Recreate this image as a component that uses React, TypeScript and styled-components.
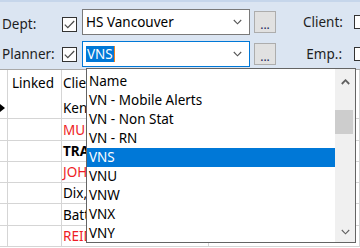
import React from "react";
import styled, { createGlobalStyle } from "styled-components";

const GlobalStyle = createGlobalStyle`
  html, body { margin: 0; padding: 0; background: #fff; }
  body { font-family: "Noto Sans", "Liberation Sans", sans-serif; }
`;

const Page = styled.div`
  width: 360px;
  height: 248px;
  position: relative;
  overflow: hidden;
  font-size: 13.5px;
  color: #1e1e1e;
`;

const FilterBar = styled.div`
  height: 69px;
  box-sizing: border-box;
  background: #dbe5f2;
  border-top: 2px solid #c6d6eb;
  padding: 7px 0 0 2px;
  display: flex;
  flex-direction: column;
  gap: 6px;
`;

const FilterRow = styled.div`
  display: flex;
  align-items: center;
  height: 26px;
  white-space: nowrap;
`;

const Label = styled.span<{ $drop?: number }>`
  width: 60px;
  flex: none;
  margin-top: ${(p) => p.$drop ?? 0}px;
`;

const CheckBox = styled.span<{ $drop?: number }>`
  width: 15px;
  height: 15px;
  box-sizing: border-box;
  border: 1px solid #333;
  background: #fdfdfd;
  margin-right: 5px;
  margin-top: ${(p) => p.$drop ?? 0}px;
  flex: none;
  display: grid;
  place-items: center;
`;

const Combo = styled.div<{ $focused?: boolean }>`
  width: 168px;
  height: 26px;
  box-sizing: border-box;
  border: 1px solid ${(p) => (p.$focused ? "#0078d7" : "#7a7a7a")};
  background: #fff;
  display: flex;
  align-items: center;
  padding: 0 7px 0 3px;
  flex: none;
`;

const ComboText = styled.span`
  flex: 1;
  color: #000;
`;

const Selected = styled.span`
  background: #0078d7;
  color: #fff;
  padding: 0 1px;
  margin-top: -3px;
  line-height: 16px;
  display: inline-block;
  border-right: 1px solid #f0801e;
`;

const DotsButton = styled.div`
  width: 22px;
  height: 22px;
  box-sizing: border-box;
  margin-left: 4px;
  background: #e1e1e1;
  border: 1px solid #adadad;
  display: flex;
  justify-content: center;
  align-items: flex-end;
  line-height: 15px;
  font-size: 12px;
  color: #24245a;
  flex: none;
`;

const SideLabel = styled.span`
  margin-left: 27px;
  width: 39px;
  margin-right: 12px;
  text-align: right;
  flex: none;
`;

const SmallBox = styled.span`
  width: 14px;
  height: 14px;
  box-sizing: border-box;
  border: 1px solid #333;
  background: #fff;
  flex: none;
`;

const GridArea = styled.div`
  border-top: 1px solid #a9a9a9;
  background: #fff;
  display: grid;
  grid-template-columns: 8px 54px 147px 1fr;
  grid-template-rows: 27px 22px 22px 21px 21px 21px 22px 21px;
`;

const Cell = styled.div<{ $line?: boolean; $tone?: "red" | "bold" }>`
  box-sizing: border-box;
  border-right: 1px solid #d5d5d5;
  border-bottom: ${(p) => (p.$line === false ? "none" : "1px solid #d5d5d5")};
  padding: 0 0 0 1px;
  display: flex;
  align-items: center;
  white-space: nowrap;
  overflow: hidden;
  color: ${(p) => (p.$tone === "red" ? "#ee1c25" : "#000")};
  font-weight: ${(p) => (p.$tone === "bold" ? 700 : 400)};
`;

const HeadCell = styled(Cell)`
  align-items: flex-start;
  padding: 4px 0 0 4px;
`;

const Pointer = styled.span`
  width: 0;
  height: 0;
  border-top: 4px solid transparent;
  border-bottom: 4px solid transparent;
  border-left: 5px solid #000;
  margin-left: -1px;
`;

const DropList = styled.div`
  position: absolute;
  left: 86px;
  top: 68px;
  width: 270px;
  height: 175px;
  box-sizing: border-box;
  border: 1px solid #646464;
  background: #fff;
  display: flex;
  color: #000;
`;

const Items = styled.div`
  flex: 1;
  padding-top: 3px;
  overflow: hidden;
`;

const Item = styled.div<{ $active?: boolean }>`
  height: 19px;
  line-height: 19px;
  padding-left: 2px;
  background: ${(p) => (p.$active ? "#0078d7" : "transparent")};
  color: ${(p) => (p.$active ? "#fff" : "#000")};
  white-space: nowrap;
`;

const ScrollBar = styled.div`
  width: 20px;
  background: #f0f0f0;
  display: flex;
  flex-direction: column;
`;

const ScrollArrow = styled.div<{ $h: number }>`
  height: ${(p) => p.$h}px;
  display: grid;
  place-items: center;
`;

const Track = styled.div`
  flex: 1;
`;

const Thumb = styled.div`
  margin: 16px 0 0 0;
  width: 18px;
  height: 24px;
  background: #cdcdcd;
`;

const Check = () => (
  <svg width="11" height="9" viewBox="0 0 11 9">
    <polyline points="0.8,4.6 3.8,7.6 10.2,1" fill="none" stroke="#4a4a4a" strokeWidth="1.2" />
  </svg>
);

const Chevron = ({ up, color = "#555", w = 9 }: { up?: boolean; color?: string; w?: number }) => (
  <svg width={w} height="6" viewBox="0 0 9 6">
    <polyline
      points={up ? "0.8,5 4.5,1.2 8.2,5" : "0.8,1 4.5,4.8 8.2,1"}
      fill="none"
      stroke={color}
      strokeWidth={up ? 1.8 : 1.1}
    />
  </svg>
);

const rows: { name: string; tone?: "red" | "bold"; current?: boolean }[] = [
  { name: "Kennedy, Sarah", current: true },
  { name: "MURPHY, Ann", tone: "red" },
  { name: "TRAN, Linh", tone: "bold" },
  { name: "JOHNSON, Mary", tone: "red" },
  { name: "Dix, Robert" },
  { name: "Batten, Joan" },
  { name: "REID, Helen", tone: "red" },
];

const planners = [
  "Name",
  "VN - Mobile Alerts",
  "VN - Non Stat",
  "VN - RN",
  "VNS",
  "VNU",
  "VNW",
  "VNX",
  "VNY",
];

function App() {
  return (
    <Page>
      <GlobalStyle />
      <FilterBar>
        <FilterRow>
          <Label $drop={4}>Dept:</Label>
          <CheckBox $drop={4}>
            <Check />
          </CheckBox>
          <Combo>
            <ComboText>HS Vancouver</ComboText>
            <Chevron />
          </Combo>
          <DotsButton>...</DotsButton>
          <SideLabel>Client:</SideLabel>
          <SmallBox />
        </FilterRow>
        <FilterRow>
          <Label>Planner:</Label>
          <CheckBox>
            <Check />
          </CheckBox>
          <Combo $focused>
            <ComboText>
              <Selected>VNS</Selected>
            </ComboText>
            <Chevron />
          </Combo>
          <DotsButton>...</DotsButton>
          <SideLabel>Emp.:</SideLabel>
          <SmallBox />
        </FilterRow>
      </FilterBar>

      <GridArea>
        <Cell $line={false} />
        <HeadCell $line={false}>Linked</HeadCell>
        <HeadCell $line={false} style={{ paddingLeft: 1 }}>
          Client
        </HeadCell>
        <Cell $line={false} />
        {rows.map((r) => (
          <React.Fragment key={r.name}>
            <Cell>{r.current && <Pointer />}</Cell>
            <Cell />
            <Cell $tone={r.tone}>{r.name}</Cell>
            <Cell />
          </React.Fragment>
        ))}
      </GridArea>

      <DropList>
        <Items>
          {planners.map((p) => (
            <Item key={p} $active={p === "VNS"}>
              {p}
            </Item>
          ))}
        </Items>
        <ScrollBar>
          <ScrollArrow $h={25}>
            <Chevron up color="#606060" />
          </ScrollArrow>
          <Track>
            <Thumb />
          </Track>
          <ScrollArrow $h={20}>
            <Chevron color="#606060" />
          </ScrollArrow>
        </ScrollBar>
      </DropList>
    </Page>
  );
}

export default App;
